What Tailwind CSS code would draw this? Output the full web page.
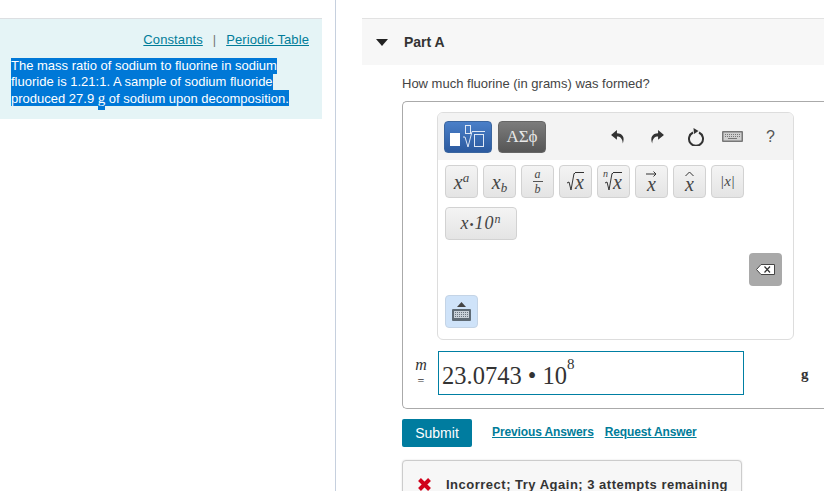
<!DOCTYPE html>
<html lang="en">
<head>
  <meta charset="UTF-8" />
  <title>Part A</title>
  <script src="https://cdn.jsdelivr.net/npm/@tailwindcss/browser@4"></script>
</head>
<body class="bg-white text-[#333] font-['Liberation_Sans',Arial,sans-serif] h-[491px] overflow-hidden flex">

  <!-- left column -->
  <div class="w-[336px] h-[491px] shrink-0 border-r border-[#c6d0de] pt-[18px] pr-[13px]">
    <div class="h-[101px] bg-[#e5f4f6] border-t border-[#dcdfe2] pl-[11px] pr-[13px] pt-[13px]">
      <div class="flex justify-end items-center text-[13px] leading-[16px] text-[#007c99]">
        <a class="underline tracking-[0.1px]">Constants</a>
        <span class="mx-[10px] text-[#777]">|</span>
        <a class="underline tracking-[0.1px]">Periodic Table</a>
      </div>
      <div class="mt-[10px] text-[13px] leading-[16px] text-white whitespace-nowrap">
        <div class="bg-[#0078d7] w-fit">The mass ratio of sodium to fluorine in sodium</div>
        <div class="bg-[#0078d7] w-fit">fluoride is 1.21:1. A sample of sodium fluoride</div>
        <div class="bg-[#0078d7] w-fit h-[16px]">produced 27.9 <span class="font-['Liberation_Serif',serif] text-[15px] inline-block h-[20px] bg-[#0078d7]">g</span> of sodium upon decomposition.</div>
      </div>
    </div>
  </div>

  <!-- right column -->
  <div class="flex-1 min-w-0 pl-[26px] pt-[18px]">
    <div class="h-[47px] bg-[#f7f7f7] border-t border-[#e2e2e2] flex items-center pl-[14px]">
      <svg width="12" height="7" viewBox="0 0 12 7"><path d="M0 0H12L6 7Z" fill="#222"/></svg>
      <span class="ml-[16px] text-[14px] font-bold text-[#333]">Part A</span>
    </div>

    <div class="pl-[40px]">
      <p class="mt-[11px] text-[13px] leading-[16px] text-[#444]">How much fluorine (in grams) was formed?</p>

      <div class="mt-[9px] w-[440px] h-[308px] border border-[#aaa] border-r-0 rounded-tl-[5px] rounded-bl-[5px] pl-[34px] pt-[10px] relative">
        <!-- palette -->
        <div class="w-[357px] h-[228px] border border-[#ddd] rounded-[6px] overflow-hidden">
          <div class="h-[47px] bg-[#f3f3f3] flex items-center pl-[6px]">
            <div class="w-[48px] h-[32px] rounded-[4px] bg-gradient-to-b from-[#4a7fc8] to-[#2b5a9f] border border-[#3a659f] flex items-center justify-center gap-[2px]">
              <div class="w-[10px] h-[13px] bg-white mt-[5px]"></div>
              <svg width="24" height="26" viewBox="0 0 24 26" fill="none" stroke="#dfe8f5" stroke-width="1"><rect x="3.5" y="1.5" width="5" height="8"/><path d="M1 13H3L6 23L10 7.5H23"/><rect x="12.5" y="10.5" width="9" height="12"/></svg>
            </div>
            <div class="ml-[6px] w-[48px] h-[32px] rounded-[4px] bg-gradient-to-b from-[#7c7c7c] to-[#565656] border border-[#666] flex items-center justify-center text-[17px] text-[#e8e8e8] font-['Liberation_Serif',serif]">ΑΣϕ</div>
            <div class="ml-[62px] w-[20px] flex justify-center">
              <svg width="16" height="15" viewBox="0 0 14 14"><path d="M6 1L0.5 5.5L6 10V7C9 7 11 8.5 11.5 13.5C13.5 8 11.5 4 6 4Z" fill="#333"/></svg>
            </div>
            <div class="ml-[19px] w-[20px] flex justify-center">
              <svg width="16" height="15" viewBox="0 0 14 14"><path d="M8 1L13.5 5.5L8 10V7C5 7 3 8.5 2.5 13.5C0.5 8 2.5 4 8 4Z" fill="#333"/></svg>
            </div>
            <div class="ml-[19px] w-[20px] flex justify-center">
              <svg width="18" height="19" viewBox="0 0 18 19" fill="none"><path d="M6 5.5A7 7 0 1 0 12 5.5" stroke="#333" stroke-width="2"/><path d="M6.5 1L11.5 4L7 7Z" fill="#333"/></svg>
            </div>
            <div class="ml-[16px]">
              <svg width="21" height="11" viewBox="0 0 21 11"><rect width="21" height="11" rx="1" fill="#777"/><rect x="1.5" y="1.5" width="18" height="8" fill="#cfcfcf"/><path d="M3 3.5H18M3 5.5H18" stroke="#777" stroke-dasharray="1 1"/><path d="M6 7.5H15" stroke="#777"/></svg>
            </div>
            <span class="ml-[23px] text-[16px] text-[#555]">?</span>
          </div>

          <div class="pl-[7px] pt-[5px] flex flex-col gap-[9px] font-['Liberation_Serif',serif] italic text-[#444]">
            <div class="flex gap-[5px]">
              <div class="w-[33px] h-[33px] rounded-[4px] border border-[#d2d2d2] bg-gradient-to-b from-[#f4f4f4] to-[#e4e4e4] flex items-center justify-center text-[20px]"><span>x<sup class="text-[13px] -top-[7px] relative align-baseline">a</sup></span></div>
              <div class="w-[33px] h-[33px] rounded-[4px] border border-[#d2d2d2] bg-gradient-to-b from-[#f4f4f4] to-[#e4e4e4] flex items-center justify-center text-[20px]"><span>x<sub class="text-[13px] top-[3px] relative align-baseline">b</sub></span></div>
              <div class="w-[33px] h-[33px] rounded-[4px] border border-[#d2d2d2] bg-gradient-to-b from-[#f4f4f4] to-[#e4e4e4] flex flex-col items-center justify-center gap-[1px] text-[12px] leading-[12px]"><span>a</span><span class="w-[10px] border-t border-[#555]"></span><span>b</span></div>
              <div class="w-[33px] h-[33px] rounded-[4px] border border-[#d2d2d2] bg-gradient-to-b from-[#f4f4f4] to-[#e4e4e4] flex items-center justify-center text-[20px]">
                <svg width="8" height="19" viewBox="0 0 8 19" fill="none" stroke="#333"><path d="M0 11L2 10L4 18L7 1.5H8"/></svg><span class="border-t border-[#333] leading-[18px]">x</span>
              </div>
              <div class="w-[33px] h-[33px] rounded-[4px] border border-[#d2d2d2] bg-gradient-to-b from-[#f4f4f4] to-[#e4e4e4] flex items-center justify-center text-[20px] relative">
                <span class="absolute left-[5px] top-[3px] text-[10px] leading-[10px]">n</span>
                <svg width="8" height="19" viewBox="0 0 8 19" fill="none" stroke="#333"><path d="M0 11L2 10L4 18L7 1.5H8"/></svg><span class="border-t border-[#333] leading-[18px]">x</span>
              </div>
              <div class="w-[33px] h-[33px] rounded-[4px] border border-[#d2d2d2] bg-gradient-to-b from-[#f4f4f4] to-[#e4e4e4] flex flex-col items-center justify-center text-[20px] leading-[15px]">
                <svg width="11" height="6" viewBox="0 0 11 6" fill="none" stroke="#333"><path d="M0 3H10M7.5 0.5L10 3L7.5 5.5"/></svg><span>x</span>
              </div>
              <div class="w-[33px] h-[33px] rounded-[4px] border border-[#d2d2d2] bg-gradient-to-b from-[#f4f4f4] to-[#e4e4e4] flex flex-col items-center justify-center text-[20px] leading-[15px]">
                <svg width="9" height="6" viewBox="0 0 9 6" fill="none" stroke="#333"><path d="M0.5 5L4.5 1L8.5 5"/></svg><span>x</span>
              </div>
              <div class="w-[33px] h-[33px] rounded-[4px] border border-[#d2d2d2] bg-gradient-to-b from-[#f4f4f4] to-[#e4e4e4] flex items-center justify-center text-[15px]"><span>|x|</span></div>
            </div>
            <div class="w-[72px] h-[33px] rounded-[4px] border border-[#d2d2d2] bg-gradient-to-b from-[#f4f4f4] to-[#e4e4e4] flex items-center justify-center text-[18px] tracking-[1px]"><span>x<span class="not-italic text-[12px]">•</span>10<sup class="text-[12px] -top-[6px] relative align-baseline">n</sup></span></div>
          </div>

          <div class="flex justify-end pr-[11px] mt-[13px]">
            <div class="w-[33px] h-[33px] rounded-[4px] bg-[#a9a9a9] flex items-center justify-center">
              <svg width="19" height="11" viewBox="0 0 19 11"><path d="M5 0.5H18.5V10.5H5L0.5 5.5Z" fill="#fff" stroke="#444"/><path d="M8.5 2.5L14 8.5M14 2.5L8.5 8.5" stroke="#333" stroke-width="1.2"/></svg>
            </div>
          </div>

          <div class="pl-[7px] mt-[9px]">
            <div class="w-[33px] h-[33px] rounded-[4px] bg-[#cfe3f9] border border-[#c4d4e6] flex flex-col items-center justify-center gap-[2px]">
              <svg width="9" height="5" viewBox="0 0 9 5"><path d="M0 5H9L4.5 0Z" fill="#444"/></svg>
              <svg width="19" height="12" viewBox="0 0 19 12"><rect width="19" height="12" rx="1" fill="#5f6b75"/><rect x="2" y="2" width="15" height="7" fill="#c9d1d9"/><path d="M3 3.5H16M3 5.5H16M3 7.5H16" stroke="#6b7680" stroke-dasharray="1 1"/></svg>
            </div>
          </div>
        </div>

        <!-- answer row -->
        <div class="absolute left-0 right-0 top-[249px] flex items-start">
          <div class="w-[35px] pl-[6px] text-center font-['Liberation_Serif',serif] text-[#333]">
            <div class="w-[24px] pt-[8px] italic text-[16px] leading-[12px]">m</div>
            <div class="w-[24px] pt-[3px] text-[12px] leading-[14px]">=</div>
          </div>
          <div class="w-[306px] h-[44px] border border-[#007fa3] pl-[3px] font-['Liberation_Serif',serif] text-[24.5px] leading-[47px] text-[#333] whitespace-nowrap">23.0743 • 10<sup class="text-[15px] relative -top-[15px] align-baseline">8</sup></div>
        </div>
      </div>

      <div class="mt-[10px] flex items-center">
        <button class="w-[70px] h-[28px] bg-[#007c9f] rounded-[2px] text-white text-[14px]">Submit</button>
        <a class="ml-[20px] text-[12px] font-bold text-[#007c99] underline tracking-[-0.12px] -mt-[2px]">Previous Answers</a>
        <a class="ml-[11px] text-[12px] font-bold text-[#007c99] underline tracking-[-0.12px] -mt-[2px]">Request Answer</a>
      </div>

      <div class="mt-[13px] w-[340px] h-[40px] border border-[#ccc] rounded-[4px] bg-[#f7f7f7] shadow-[0_0_2px_#ddd] flex items-start pl-[14px] pt-[15px]">
        <svg width="15" height="15" viewBox="0 0 15 15" class="mt-[1px]"><path d="M2.5 2.5L12.5 12.5M12.5 2.5L2.5 12.5" stroke="#d0021b" stroke-width="4"/></svg>
        <span class="ml-[14px] text-[13px] leading-[18px] font-bold text-[#333] tracking-[0.5px] whitespace-nowrap">Incorrect; Try Again; 3 attempts remaining</span>
      </div>
    </div>
  </div>

  <span class="absolute left-[801px] top-[363px] font-['Liberation_Serif',serif] font-bold text-[15px] text-[#333]">g</span>
</body>
</html>
